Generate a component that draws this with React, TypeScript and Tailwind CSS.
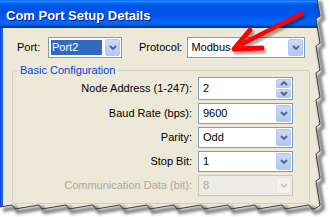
import React from 'react'

// jagged torn-paper edge on the right and bottom of the screenshot
function tornPoints() {
  const pts: [number, number][] = []
  const jit = (i: number) => (((i * 37 + 11) % 9) - 4) / 2
  for (let i = 0, y = -2; y < 207; i++, y += 3) pts.push([318 + jit(i), y])
  pts.push([318, 207])
  for (let i = 0, x = 315; x > -3; i++, x -= 3) pts.push([x, 207 + jit(i + 5)])
  return pts
}

function Chevron({ color, up }: { color: string; up?: boolean }) {
  return (
    <svg width="8" height="5" viewBox="0 0 8 5">
      <path d={up ? 'M1 4 L4 1 L7 4' : 'M1 1 L4 4 L7 1'} fill="none" stroke={color} strokeWidth="1.8" />
    </svg>
  )
}

function DropButton({ disabled }: { disabled?: boolean }) {
  if (disabled) {
    return (
      <div className="w-[15px] h-full flex items-center justify-center rounded-[2px] border border-[#E5E4DC] bg-[#F3F2EC]">
        <Chevron color="#C9C7BA" />
      </div>
    )
  }
  return (
    <div className="w-[15px] h-full flex items-center justify-center rounded-[2px] border border-[#B4C7F2] bg-[linear-gradient(#CAD8FA,#B3C8F6)]">
      <Chevron color="#4D6185" />
    </div>
  )
}

function SpinButton() {
  return (
    <div className="w-[15px] h-full flex flex-col gap-[1px]">
      <div className="flex-1 flex items-center justify-center rounded-[2px] border border-[#B4C7F2] bg-[linear-gradient(#CAD8FA,#B3C8F6)]">
        <Chevron color="#4D6185" up />
      </div>
      <div className="flex-1 flex items-center justify-center rounded-[2px] border border-[#B4C7F2] bg-[linear-gradient(#CAD8FA,#B3C8F6)]">
        <Chevron color="#4D6185" />
      </div>
    </div>
  )
}

function Row({ label, value, spin, disabled }: { label: string; value: string; spin?: boolean; disabled?: boolean }) {
  return (
    <div className="flex items-center justify-end gap-[6px]">
      <span className={disabled ? 'text-[#ACA899]' : 'text-black'}>{label}</span>
      <div
        className={
          disabled
            ? 'w-[95px] h-[21px] flex items-stretch p-[1px] border border-[#C9C7BA] bg-[#EEEDE5]'
            : spin
            ? 'w-[95px] h-[23px] flex items-stretch p-[1px] border border-[#7F9DB9] bg-white'
            : 'w-[95px] h-[21px] flex items-stretch p-[1px] border border-[#7F9DB9] bg-white'
        }
      >
        <span className={disabled ? 'flex-1 flex items-center pl-[3px] text-[#ACA899]' : 'flex-1 flex items-center pl-[3px]'}>
          {value}
        </span>
        {spin ? <SpinButton /> : <DropButton disabled={disabled} />}
      </div>
    </div>
  )
}

const ROWS = [
  { label: 'Node Address (1-247):', value: '2', spin: true },
  { label: 'Baud Rate (bps):', value: '9600' },
  { label: 'Parity:', value: 'Odd' },
  { label: 'Stop Bit:', value: '1' },
  { label: 'Communication Data (bit):', value: '8', disabled: true },
]

export default function App() {
  const pts = tornPoints()
  const line = pts.map(p => p.join(',')).join(' ')
  const shadow = pts.map(p => `${p[0] + 3},${p[1] + 3}`).join(' ')
  const mask = line + ' -3,220 333,220 333,-3'

  return (
    <div className="relative w-[330px] h-[217px] overflow-hidden bg-white text-[11px] leading-[13px] font-['Liberation_Sans',Arial,sans-serif]">
      <div className="w-[320px] h-[210px] flex flex-col bg-[#ECE9D8]">
        <div className="h-[28px] shrink-0 flex items-center pl-[6px] pt-[2px] bg-[linear-gradient(#0058EE_0%,#3593FF_4%,#288EFF_6%,#127DFF_8%,#036FFC_10%,#0262EE_14%,#0057E5_20%,#0054E3_24%,#0055EB_56%,#005BF5_66%,#026AFE_76%,#0062EF_86%,#0052D6_92%,#0040AB_94%,#003092_100%)]">
          <span className="text-white font-bold text-[13px] [text-shadow:1px_1px_0_#0A1883]">Com Port Setup Details</span>
        </div>

        <div className="flex-1 flex">
          <div className="w-[3px] bg-[linear-gradient(to_right,#0831D9,#166AEE,#0855DD)]" />
          <div className="flex-1 flex flex-col pt-[9px]">
            <div className="flex items-center pl-[14px]">
              <span className="w-[31px]">Port:</span>
              <div className="w-[74px] h-[21px] flex items-stretch p-[1px] border border-[#7F9DB9] bg-white">
                <span className="flex-1 flex items-center ml-[1px] mr-[3px] my-[1px] pl-[1px] bg-[#316AC5] text-white">Port2</span>
                <DropButton />
              </div>
              <span className="ml-[17px]">Protocol:</span>
              <div className="ml-[5px] w-[118px] h-[21px] flex items-stretch p-[1px] border border-[#7F9DB9] bg-white">
                <span className="flex-1 flex items-center pl-[2px]">Modbus</span>
                <DropButton />
              </div>
            </div>

            <fieldset className="ml-[9px] mt-[6px] w-[298px] pr-[16px] pb-[7px] border border-[#D0D0BF] rounded-[3px] flex flex-col gap-[3px]">
              <legend className="ml-[5px] px-[2px] text-[#0046D5]">Basic Configuration</legend>
              {ROWS.map(r => (
                <Row key={r.label} label={r.label} value={r.value} spin={r.spin} disabled={r.disabled} />
              ))}
            </fieldset>
          </div>
        </div>
      </div>

      <svg className="absolute inset-0 pointer-events-none" width="330" height="217" viewBox="0 0 330 217">
        <defs>
          <filter id="blur" x="-10%" y="-10%" width="120%" height="120%">
            <feGaussianBlur stdDeviation="1.6" />
          </filter>
          <filter id="ablur" x="-20%" y="-20%" width="140%" height="140%">
            <feGaussianBlur stdDeviation="1.2" />
          </filter>
        </defs>
        <polygon points={mask} fill="#fff" />
        <polyline points={shadow} fill="none" stroke="#000" strokeOpacity="0.5" strokeWidth="4" filter="url(#blur)" />
        <polyline points={line} fill="none" stroke="#3C3C3C" strokeWidth="1" />

        <g transform="translate(2,3)" filter="url(#ablur)" opacity="0.35">
          <line x1="301" y1="14" x2="242" y2="44" stroke="#000" strokeWidth="4.5" strokeLinecap="round" />
          <polyline points="250,30 234,49 262,48" fill="none" stroke="#000" strokeWidth="5" strokeLinejoin="round" strokeLinecap="round" />
        </g>
        <line x1="301" y1="14" x2="242" y2="44" stroke="#F00" strokeWidth="4.5" strokeLinecap="round" />
        <polyline points="250,30 234,49 262,48" fill="none" stroke="#F00" strokeWidth="5" strokeLinejoin="round" strokeLinecap="round" />
      </svg>
    </div>
  )
}
